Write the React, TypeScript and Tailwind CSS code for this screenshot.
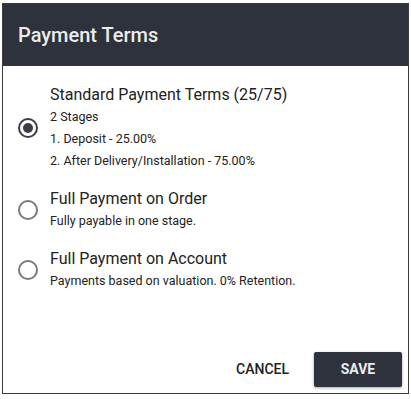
import React, { useState } from 'react';

interface TermOption {
  id: string;
  title: string;
  lines: string[];
}

const OPTIONS: TermOption[] = [
  {
    id: 'standard',
    title: 'Standard Payment Terms (25/75)',
    lines: ['2 Stages', '1. Deposit - 25.00%', '2. After Delivery/Installation - 75.00%'],
  },
  { id: 'order', title: 'Full Payment on Order', lines: ['Fully payable in one stage.'] },
  { id: 'account', title: 'Full Payment on Account', lines: ['Payments based on valuation. 0% Retention.'] },
];

function Radio({ checked }: { checked: boolean }) {
  return (
    <span
      className={`flex h-[20px] w-[20px] items-center justify-center rounded-full border-2 ${
        checked ? 'border-[#3a3d45]' : 'border-[#7a7a7a]'
      }`}
    >
      {checked && <span className="h-[10px] w-[10px] rounded-full bg-[#3a3d45]" />}
    </span>
  );
}

export default function App() {
  const [selected, setSelected] = useState('standard');

  return (
    <div className="h-[399px] w-[411px] bg-white pl-[2px] pt-[3px]" style={{ fontFamily: 'Roboto, "Liberation Sans", sans-serif' }}>
      <div className="flex h-[391px] w-[407px] flex-col border border-[#3c3c3c] bg-white">
        <div className="flex h-[62px] items-center bg-[#2e323c] pl-[15px]">
          <h2 className="text-[20px] font-medium text-[#ececec]">Payment Terms</h2>
        </div>

        <div className="flex flex-1 flex-col gap-[16px] pt-[18px]">
          {OPTIONS.map(opt => (
            <label key={opt.id} className="flex cursor-pointer items-center" onClick={() => setSelected(opt.id)}>
              <span className="flex w-[47px] justify-center pl-[3px]">
                <Radio checked={selected === opt.id} />
              </span>
              <span className="flex flex-col text-[#222]">
                <span className="text-[16px] leading-[22px]">{opt.title}</span>
                {opt.lines.map(l => (
                  <span key={l} className="text-[12.5px] leading-[22px]">{l}</span>
                ))}
              </span>
            </label>
          ))}
        </div>

        <div className="flex items-center justify-end gap-[25px] pb-[6px] pr-[6px]">
          <button className="text-[14px] font-medium text-[#222]">CANCEL</button>
          <button className="h-[35px] w-[88px] rounded-[2px] bg-[#2e323c] text-[14px] font-bold text-[#ececec] shadow-[0_1px_3px_rgba(0,0,0,0.35)]">
            SAVE
          </button>
        </div>
      </div>
    </div>
  );
}
